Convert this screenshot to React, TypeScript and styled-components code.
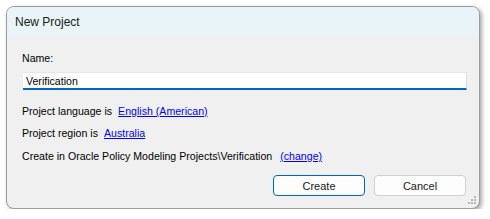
import styled, { createGlobalStyle } from 'styled-components';

const GlobalStyle = createGlobalStyle`
  html, body {
    margin: 0;
    padding: 0;
    background: #ffffff;
  }
  body {
    font-family: "Liberation Sans", Arial, sans-serif;
  }
`;

const Page = styled.div`
  padding: 6px 0 0 6px;
`;

const Window = styled.div`
  position: relative;
  width: 474px;
  height: 203px;
  box-sizing: border-box;
  border: 1px solid #9c9c9c;
  border-radius: 8px;
  background: #f0f0f0;
  overflow: hidden;
  box-shadow: 2px 2px 4px rgba(0, 0, 0, 0.35);
  display: flex;
  flex-direction: column;
`;

const TitleBar = styled.div`
  height: 29px;
  flex-shrink: 0;
  background: #e8f4f7;
  display: flex;
  align-items: center;
  padding-left: 8px;
  font-size: 12px;
  color: #1a1a1a;
`;

const Body = styled.div`
  flex: 1;
  display: flex;
  flex-direction: column;
  padding: 15px 12px 0 15px;
  font-size: 10.6px;
  color: #000000;
`;

const Label = styled.div`
  height: 14px;
  line-height: 14px;
`;

const TextInput = styled.div`
  margin: 7px 0 0 1px;
  height: 18px;
  box-sizing: border-box;
  background: #ffffff;
  border-top: 1px solid #e6e6e6;
  border-right: 1px solid #dcdcdc;
  border-bottom: 2px solid #0067c0;
  padding-left: 3px;
  display: flex;
  align-items: center;
  font-size: 10.6px;
`;

const InfoLine = styled.div<{ $gap: number }>`
  margin-top: ${(p) => p.$gap}px;
  height: 14px;
  line-height: 14px;
  white-space: nowrap;
`;

const Link = styled.a<{ $space?: number }>`
  margin-left: ${(p) => p.$space ?? 6}px;
  color: #0000ff;
  text-decoration: underline;
  cursor: pointer;
`;

const ButtonRow = styled.div`
  margin-top: 12px;
  display: flex;
  justify-content: flex-end;
  gap: 9px;
  padding-right: 1px;
`;

const Button = styled.button<{ $primary?: boolean }>`
  width: 92px;
  height: 21px;
  box-sizing: border-box;
  border-radius: 4px;
  border: 1px solid ${(p) => (p.$primary ? '#0067c0' : '#d0d0d0')};
  background: #fdfdfd;
  font-family: "Liberation Sans", Arial, sans-serif;
  font-size: 11px;
  color: #1a1a1a;
  padding: 0;
`;

const Grip = styled.svg`
  position: absolute;
  right: 2px;
  bottom: 3px;
`;

export default function App() {
  const dots = [
    [6, 0],
    [6, 3],
    [3, 3],
    [6, 6],
    [3, 6],
    [0, 6],
  ];
  return (
    <>
      <GlobalStyle />
      <Page>
        <Window>
          <TitleBar>New Project</TitleBar>
          <Body>
            <Label>Name:</Label>
            <TextInput>Verification</TextInput>
            <InfoLine $gap={14}>
              Project language is<Link>English (American)</Link>
            </InfoLine>
            <InfoLine $gap={8}>
              Project region is<Link>Australia</Link>
            </InfoLine>
            <InfoLine $gap={9}>
              Create in Oracle Policy Modeling Projects\Verification
              <Link $space={8}>(change)</Link>
            </InfoLine>
            <ButtonRow>
              <Button $primary>Create</Button>
              <Button>Cancel</Button>
            </ButtonRow>
          </Body>
          <Grip width="9" height="9" viewBox="0 0 9 9">
            {dots.map(([x, y]) => (
              <rect key={`${x}-${y}`} x={x} y={y} width="2" height="2" fill="#b8b8b8" />
            ))}
          </Grip>
        </Window>
      </Page>
    </>
  );
}
